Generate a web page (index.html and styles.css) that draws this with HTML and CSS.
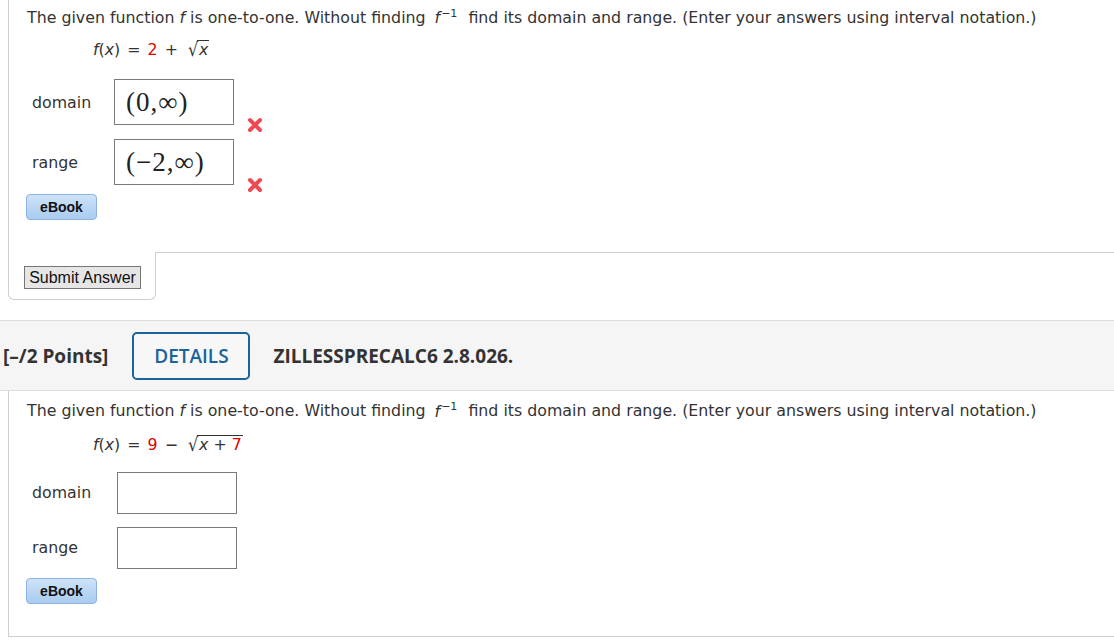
FILE: index.html
```html
<!DOCTYPE html>
<html lang="en">
<head>
    <meta charset="UTF-8">
    <title>Question</title>
    <link rel="stylesheet" href="styles.css">
</head>
<body>
    <!-- 이전 문제 (채점됨) -->
    <section class="question">
        <div class="q-body first">
            <p class="prompt">The given function <i>f</i> is one-to-one. Without finding <span class="finv"><i>f</i><sup>−1</sup></span> find its domain and range. (Enter your answers using interval notation.)</p>
            <div class="formula">
                <i>f</i>(<i>x</i>) <span class="op">=</span> <span class="num">2</span> <span class="op">+</span> <span class="radical"><span class="root">√</span><span class="radicand"><i>x</i></span></span>
            </div>

            <div class="answer-row">
                <span class="label">domain</span>
                <div class="answer-box tall"><span class="math">(0,∞)</span></div>
                <svg class="wrong" viewBox="0 0 16 16"><path d="M3 3 L13 13 M13 3 L3 13"/></svg>
            </div>
            <div class="answer-row">
                <span class="label">range</span>
                <div class="answer-box tall"><span class="math">(−2,∞)</span></div>
                <svg class="wrong" viewBox="0 0 16 16"><path d="M3 3 L13 13 M13 3 L3 13"/></svg>
            </div>

            <button class="ebook">eBook</button>
        </div>
        <div class="submit-tab">
            <button class="submit">Submit Answer</button>
        </div>
    </section>

    <!-- 다음 문제 헤더 -->
    <header class="q-header">
        <span class="points">[–/2 Points]</span>
        <span class="details">DETAILS</span>
        <span class="q-code">ZILLESSPRECALC6 2.8.026.</span>
    </header>

    <section class="question">
        <div class="q-body second">
            <p class="prompt">The given function <i>f</i> is one-to-one. Without finding <span class="finv"><i>f</i><sup>−1</sup></span> find its domain and range. (Enter your answers using interval notation.)</p>
            <div class="formula">
                <i>f</i>(<i>x</i>) <span class="op">=</span> <span class="num">9</span> <span class="op">−</span> <span class="radical"><span class="root">√</span><span class="radicand"><i>x</i> + <span class="num">7</span></span></span>
            </div>

            <div class="answer-row wide">
                <span class="label">domain</span>
                <div class="answer-box"></div>
            </div>
            <div class="answer-row wide">
                <span class="label">range</span>
                <div class="answer-box"></div>
            </div>

            <button class="ebook">eBook</button>
        </div>
    </section>
</body>
</html>
```

FILE: styles.css
```css
/* 색상 변수 */
:root {
    --font-body: 'DejaVu Sans', sans-serif;
    --font-head: 'Open Sans', sans-serif;
    --color-text: #333;
    --color-line: #cfcfcf;
    --color-red: #e00000;
    --color-blue: #1a649b;
}

body {
    margin: 0;
    font-family: var(--font-body);
    font-size: 15.8px;
    color: var(--color-text);
    background: #fff;
}

/* 문제 본문 */
.question {
    margin-left: 8px;
}

.q-body {
    border-left: 1px solid var(--color-line);
    border-bottom: 1px solid var(--color-line);
    padding: 4px 0 32px 18px;
}

.q-body.second {
    padding-top: 6px;
}

.prompt {
    margin: 0;
    line-height: 20px;
}

.finv { margin: 0 6px 0 4px; }
.finv sup { font-size: 11px; margin-left: 1px; }

.formula {
    margin: 11px 0 0 66px;
    line-height: 20px;
}

.second .formula { margin-top: 12px; }

.formula .op { margin: 0 2px; }
.num { color: var(--color-red); }

.radical { margin-left: 2px; white-space: nowrap; }
.root {
    font-size: 19px;
    display: inline-block;
    transform: scaleX(0.85);
    vertical-align: -1px;
    margin-right: -2px;
}
.radicand {
    display: inline-block;
    border-top: 1px solid #333;
    line-height: 16px;
    padding: 1px 1px 0 2px;
}

/* 답 입력칸 */
.answer-row {
    display: flex;
    align-items: flex-end;
    margin-top: 14px;
}

.first .formula + .answer-row { margin-top: 19px; }
.second .answer-row { margin-top: 13px; }
.second .formula + .answer-row { margin-top: 17px; }

.label {
    width: 82px;
    padding-left: 5px;
    align-self: center;
}

.wide .label { width: 85px; }

.answer-box {
    width: 118px;
    height: 40px;
    border: 1px solid #7a7a7a;
    display: flex;
    align-items: center;
}

.answer-box.tall { height: 44px; }

.math {
    font-family: 'Liberation Serif', 'DejaVu Serif', serif;
    font-size: 27px;
    letter-spacing: 1px;
    color: #222;
    padding-left: 11px;
}

.wrong {
    width: 16px;
    height: 16px;
    margin: 0 0 -8px 13px;
    stroke: #ee4a55;
    stroke-width: 4;
    stroke-linecap: round;
    fill: none;
}

.ebook {
    display: block;
    margin: 9px 0 0 -1px;
    width: 71px;
    height: 26px;
    font-family: 'Liberation Sans', sans-serif;
    font-size: 14px;
    font-weight: 700;
    color: #111;
    background: linear-gradient(#cfe3f8, #a9cbf0);
    border: 1px solid #8db4e2;
    border-radius: 4px;
    padding: 0;
}

/* 제출 탭 */
.submit-tab {
    width: 148px;
    height: 48px;
    margin-top: -1px;
    background: #fff;
    border: 1px solid var(--color-line);
    border-top: none;
    border-radius: 0 0 6px 6px;
    padding: 14px 0 0 15px;
    box-sizing: border-box;
}

.submit {
    width: 117px;
    height: 23px;
    padding: 0;
    font-family: 'Liberation Sans', sans-serif;
    font-size: 16px;
    color: #111;
    background: #e6e6e6;
    border: 1px solid #767676;
}

/* 문제 헤더 띠 */
.q-header {
    margin-top: 20px;
    height: 69px;
    background: #f5f5f5;
    border-top: 1px solid #dcdcdc;
    border-bottom: 1px solid #dcdcdc;
    display: flex;
    align-items: center;
    padding-left: 3px;
    font-family: var(--font-head);
    font-size: 19px;
    font-weight: 700;
    color: #333;
}

.details {
    margin-left: 24px;
    width: 114px;
    height: 44px;
    border: 2px solid var(--color-blue);
    border-radius: 5px;
    display: flex;
    align-items: center;
    justify-content: center;
    font-weight: 600;
    color: var(--color-blue);
    background: #f7f7f7;
}

.q-code { margin-left: 23px; }
```
